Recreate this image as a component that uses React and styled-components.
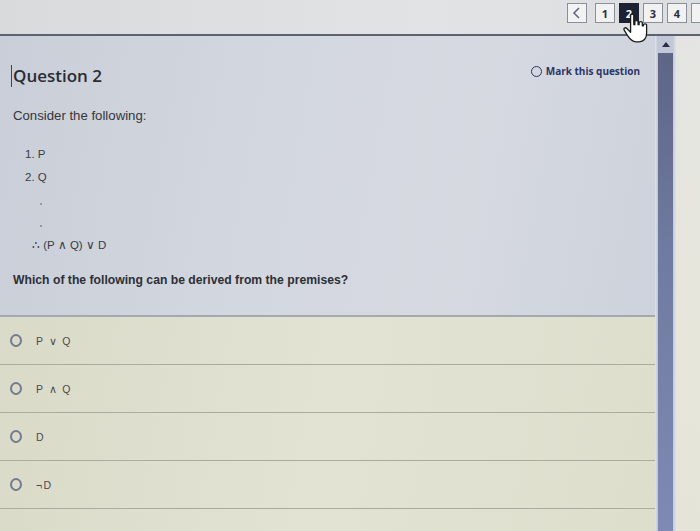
import React from "react";
import styled, { createGlobalStyle } from "styled-components";

const Global = createGlobalStyle`
  html, body { margin: 0; padding: 0; }
  body { background: #dcdcd0; font-family: "Liberation Sans", Arial, sans-serif; }
`;

const Page = styled.div`
  width: 700px;
  height: 531px;
  display: flex;
  flex-direction: column;
  overflow: hidden;
  position: relative;
`;

const TopBar = styled.div`
  height: 36px;
  background: linear-gradient(90deg, #d9dadb 0%, #e2e3e4 60%, #dcdddf 100%);
  border-bottom: 2px solid #5c6272;
  display: flex;
  justify-content: flex-end;
  align-items: flex-start;
  padding-top: 3px;
  box-sizing: border-box;
  gap: 4px;
  margin-right: -11px;
`;

const NavButton = styled.div`
  width: 20px;
  height: 20px;
  box-sizing: border-box;
  border: 1px solid ${p => (p.$active ? "#1c2134" : "#8a8f9c")};
  background: ${p => (p.$active ? "#1c2134" : "#f2f2f2")};
  color: ${p => (p.$active ? "#ffffff" : "#2a2f3c")};
  font-family: "Open Sans", sans-serif;
  font-weight: 700;
  font-size: 11px;
  display: flex;
  align-items: center;
  justify-content: center;
  margin-right: ${p => p.$gap || 0}px;
`;

const Body = styled.div`
  flex: 1;
  display: flex;
  min-height: 0;
`;

const Main = styled.div`
  width: 655px;
  display: flex;
  flex-direction: column;
`;

const QuestionPanel = styled.div`
  height: 281px;
  background: linear-gradient(100deg, #c9ced8 0%, #d3d7df 40%, #d6d9e0 70%, #cdd2dc 100%);
  border-bottom: 2px solid #a5a8ae;
  box-sizing: border-box;
  padding: 29px 15px 0 11px;
  display: flex;
  flex-direction: column;
`;

const HeaderRow = styled.div`
  display: flex;
  justify-content: space-between;
  align-items: flex-start;
`;

const Title = styled.h2`
  margin: 0;
  font-family: "Open Sans", sans-serif;
  font-weight: 600;
  font-size: 17px;
  color: #2a2c33;
  line-height: 22px;
  display: flex;
  align-items: center;
`;

const Caret = styled.span`
  width: 1px;
  height: 22px;
  background: #444;
  margin-right: 1px;
`;

const Mark = styled.div`
  display: flex;
  align-items: center;
  gap: 4px;
  margin-top: -1px;
  font-family: "Open Sans", sans-serif;
  font-weight: 700;
  font-size: 10px;
  color: #2b3566;
`;

const MarkCircle = styled.span`
  width: 9px;
  height: 9px;
  border: 1.5px solid #2b3566;
  border-radius: 50%;
`;

const Prompt = styled.p`
  margin: 21px 0 0 2px;
  font-size: 13.2px;
  color: #34363c;
`;

const Premises = styled.div`
  margin: 25px 0 0 14px;
  display: flex;
  flex-direction: column;
  gap: 11px;
  font-size: 11.5px;
  color: #3a3c44;
`;

const Dot = styled.span`
  width: 2px;
  height: 2px;
  background: #999;
  margin-left: 15px;
  margin-top: 9px;
`;

const Conclusion = styled.div`
  margin: 11px 0 0 21px;
  font-size: 11.5px;
  color: #3a3c44;
`;

const Ask = styled.p`
  margin: 21px 0 0 2px;
  font-size: 12.2px;
  font-weight: 700;
  color: #2d2f36;
`;

const Options = styled.div`
  flex: 1;
  background: linear-gradient(100deg, #dadac9 0%, #e3e3d3 50%, #dedecd 100%);
  display: flex;
  flex-direction: column;
`;

const Option = styled.label`
  height: 48px;
  border-bottom: 1px solid #a9aba7;
  display: flex;
  align-items: center;
  padding-left: 10px;
  gap: 14px;
  box-sizing: border-box;
  flex-shrink: 0;
`;

const Radio = styled.span`
  width: 8px;
  height: 9px;
  border: 2px solid #737c8e;
  border-radius: 50%;
`;

const OptionText = styled.span`
  font-size: 10.5px;
  color: #4a4c52;
  letter-spacing: 1.4px;
`;

const ScrollCol = styled.div`
  width: 21px;
  background: linear-gradient(90deg, #e2e4ea 0%, #c2c8d8 12%, #c2c8d8 85%, #dfe1e6 100%);
  display: flex;
  flex-direction: column;
  align-items: center;
  padding-top: 6px;
  box-sizing: border-box;
`;

const ArrowUp = styled.span`
  width: 0;
  height: 0;
  border-left: 4px solid transparent;
  border-right: 4px solid transparent;
  border-bottom: 5px solid #2a2f45;
`;

const Thumb = styled.div`
  margin-top: 6px;
  width: 15px;
  flex: 1;
  background: linear-gradient(180deg, #5e6585 0%, #6f7aa0 40%, #7e8ab4 100%);
`;

const RightStrip = styled.div`
  flex: 1;
  background: linear-gradient(180deg, #e4e5e2 0%, #e6e6db 60%, #e4e4d8 100%);
`;

const Hand = styled.svg`
  position: absolute;
  left: 621px;
  top: 13px;
`;

export default function App() {
  return (
    <Page>
      <Global />
      <TopBar>
        <NavButton $gap={4}>
          <svg width="10" height="12" viewBox="0 0 10 12">
            <path d="M7 1 L2 6 L7 11" fill="none" stroke="#5a6280" strokeWidth="1.5" />
          </svg>
        </NavButton>
        <NavButton>1</NavButton>
        <NavButton $active>2</NavButton>
        <NavButton>3</NavButton>
        <NavButton>4</NavButton>
        <NavButton />
      </TopBar>
      <Body>
        <Main>
          <QuestionPanel>
            <HeaderRow>
              <Title><Caret />Question 2</Title>
              <Mark><MarkCircle />Mark this question</Mark>
            </HeaderRow>
            <Prompt>Consider the following:</Prompt>
            <Premises>
              <span>1. P</span>
              <span>2. Q</span>
              <Dot />
              <Dot />
            </Premises>
            <Conclusion>∴ (P ∧ Q) ∨ D</Conclusion>
            <Ask>Which of the following can be derived from the premises?</Ask>
          </QuestionPanel>
          <Options>
            {["P ∨ Q", "P ∧ Q", "D", "¬D"].map(t => (
              <Option key={t}>
                <Radio />
                <OptionText>{t}</OptionText>
              </Option>
            ))}
          </Options>
        </Main>
        <ScrollCol>
          <ArrowUp />
          <Thumb />
        </ScrollCol>
        <RightStrip />
      </Body>
      <Hand width="32" height="32" viewBox="0 0 30 30">
        <path
          d="M9 2 C9 0.8 12 0.8 12 2 L12 11 L13 11 L13 8 C13 6.8 16 6.8 16 8 L16 11 L17 11 L17 9 C17 7.8 20 7.8 20 9 L20 12 L21 12 L21 11 C21 9.8 24 9.8 24 11 L24 19 C24 24 21 27 17 27 L14 27 C10 27 8 24 6 21 L3 16 C2 14.5 4 13 5.5 14.5 L9 18 Z"
          fill="#ffffff"
          stroke="#1a1a1a"
          strokeWidth="1.2"
          strokeLinejoin="round"
        />
      </Hand>
    </Page>
  );
}
